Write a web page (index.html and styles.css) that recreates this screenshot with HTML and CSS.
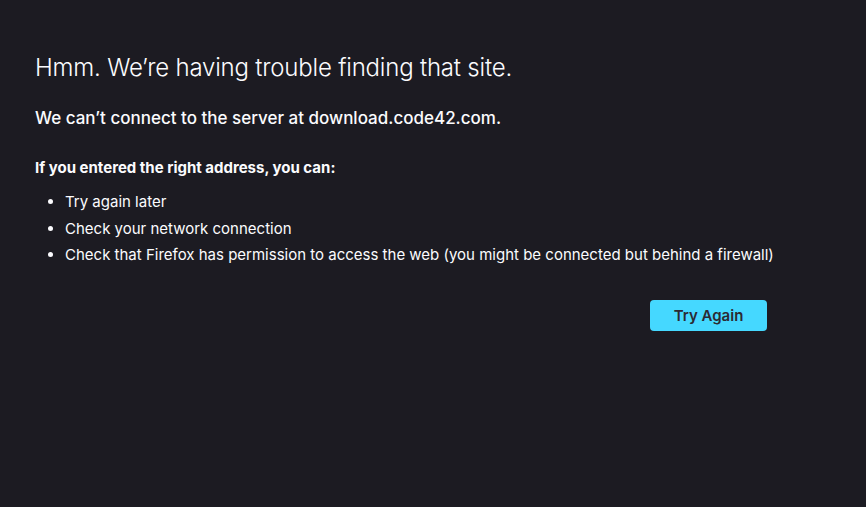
FILE: index.html
```html
<!DOCTYPE html>
<html lang="en">

<head>
    <meta charset="UTF-8">
    <meta name="viewport" content="width=device-width, initial-scale=1.0">
    <title>Server Not Found</title>
    <link rel="stylesheet" href="styles.css">
</head>

<body>
    <div class="container">
        <h1 class="title">Hmm. We’re having trouble finding that site.</h1>
        <p class="intro">We can’t connect to the server at download.code42.com.</p>

        <p class="hint">If you entered the right address, you can:</p>
        <ul class="tips">
            <li>Try again later</li>
            <li>Check your network connection</li>
            <li>Check that Firefox has permission to access the web (you might be connected but behind a firewall)</li>
        </ul>

        <div class="actions">
            <button class="primary">Try Again</button>
        </div>
    </div>
</body>

</html>
```

FILE: styles.css
```css
html, body {
    height: 100%;
}

body {
    margin: 0;
    background: #1c1b22;
    color: #fbfbfe;
    font-family: Inter, 'Noto Sans', sans-serif;
}

.container {
    width: 732px;
    padding: 50px 0 0 35px;
}

.title {
    margin: 0;
    font-size: 24px;
    font-weight: 300;
    line-height: 36px;
    letter-spacing: -0.2px;
}

.intro {
    margin: 20px 0 0;
    font-size: 17px;
    font-weight: 500;
    line-height: 24px;
}

.hint {
    margin: 28px 0 0;
    font-size: 15px;
    font-weight: 700;
    line-height: 20px;
}

.tips {
    margin: 11px 0 0;
    padding-left: 30px;
    font-size: 15px;
    line-height: 26.5px;
}

.tips li {
    white-space: nowrap;
}

.actions {
    display: flex;
    justify-content: flex-end;
    margin-top: 31px;
}

.primary {
    width: 117px;
    height: 31px;
    border: none;
    border-radius: 4px;
    background: #45d8ff;
    color: #2b2a33;
    font-family: inherit;
    font-size: 15px;
    font-weight: 600;
    cursor: pointer;
}
```
